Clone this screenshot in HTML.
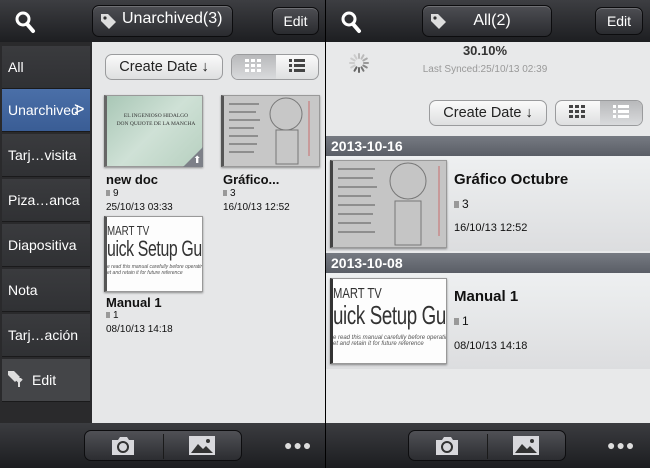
<!DOCTYPE html>
<html><head><meta charset="utf-8"><style>
*{box-sizing:border-box;margin:0;padding:0}
body{width:650px;height:468px;overflow:hidden;position:relative;font-family:"Liberation Sans",sans-serif;background:#000}
.a{position:absolute}
.hdr{background:linear-gradient(#3d3e42,#1d1e21);height:42px}
.btn{border:1px solid #0c0c0e;border-radius:7px;background:linear-gradient(#4d4e53,#2a2b2f);box-shadow:inset 0 1px 0 rgba(255,255,255,.2);color:#fff;text-align:center}
.side{background:#2a2a2c}
.si{position:absolute;left:2px;width:88px;height:43px;background:linear-gradient(#3a3b3e,#303134);color:#fff;font-size:14px;line-height:43px;padding-left:6px;border-bottom:1px solid #1a1a1b}
.lgt{background:#e6e7e8}
.sort{border:1px solid #9a9b9d;border-radius:7px;background:linear-gradient(#fafafa,#dedfe0);font-size:14.5px;color:#222;text-align:center}
.seg{border:1px solid #9a9b9d;border-radius:7px;background:linear-gradient(#fafafa,#dedfe0);overflow:hidden}
.bot{background:linear-gradient(#3b3c40,#1c1d20)}
.cam{border:1px solid #0d0d0f;border-radius:7px;background:linear-gradient(#505156,#2c2d31);overflow:hidden}
.b{font-weight:bold}
.dh{background:linear-gradient(#767a82,#5a5e66);color:#fff;font-weight:bold;font-size:14px;padding-left:5px;line-height:20px;height:20px}
.row{background:linear-gradient(#eef0f1,#dcdddf)}
.thumb{border:1px solid #999;box-shadow:0 1px 2px rgba(0,0,0,.4)}
.pg{display:inline-block;width:5px;height:7px;background:#999;margin-right:3px}
.cn{transform-origin:0 0;white-space:nowrap;color:#333;font-weight:normal}
</style></head><body>
<!-- LEFT PANEL -->
<div class="a hdr" style="left:0;top:0;width:325px"></div>
<svg class="a" style="left:14px;top:10px" width="22" height="24" viewBox="0 0 22 24"><circle cx="9" cy="9" r="6" fill="none" stroke="#fff" stroke-width="3"/><line x1="13" y1="14" x2="19" y2="21" stroke="#fff" stroke-width="4" stroke-linecap="round"/></svg>
<div class="a btn" style="left:92px;top:5px;width:141px;height:32px"></div>
<svg class="a" style="left:99px;top:12px" width="18" height="18" viewBox="0 0 18 18"><path d="M2 2h7l8 8-7 7-8-8z" fill="#ddd"/><circle cx="6" cy="6" r="1.6" fill="#333"/></svg>
<div class="a" style="left:122px;top:10px;color:#fff;font-size:16px">Unarchived(3)</div>
<div class="a btn" style="left:272px;top:7px;width:47px;height:28px;font-size:14px;line-height:27px">Edit</div>
<div class="a" style="left:0;top:42px;width:18px;height:3px;background:#ddd"></div>
<div class="a side" style="left:0;top:42px;width:92px;height:381px"></div>
<div class="si" style="top:46px">All</div>
<div class="si" style="top:89px;background:linear-gradient(#4a6fa8,#3a5d95);font-size:14px;padding-left:6px">Unarchived<span style="position:absolute;left:72px;top:-1px;font-size:18px">&gt;</span></div>
<div class="si" style="top:134px">Tarj…visita</div>
<div class="si" style="top:179px">Piza…anca</div>
<div class="si" style="top:224px">Diapositiva</div>
<div class="si" style="top:269px">Nota</div>
<div class="si" style="top:314px">Tarj…ación</div>
<div class="si" style="top:359px;background:#444548;padding-left:30px">Edit</div>
<svg class="a" style="left:7px;top:370px" width="20" height="18" viewBox="0 0 20 18"><path d="M1 1h6l6 6-5 5-7-7z" fill="#ddd"/><path d="M12 8v9M10 9h4M9 9l3 3 3-3" stroke="#ddd" stroke-width="2" fill="none"/></svg>
<div class="a lgt" style="left:92px;top:42px;width:233px;height:381px"></div>
<div class="a sort" style="left:105px;top:54px;width:118px;height:26px;line-height:24px">Create Date ↓</div>
<div class="a seg" style="left:231px;top:54px;width:88px;height:26px"><div style="position:absolute;left:0;top:0;width:44px;height:26px;background:linear-gradient(#b8b9bb,#dcdddf)"></div></div>
<svg class="a" style="left:245px;top:59px" width="16" height="15"><g fill="#fff"><rect x="0" y="0" width="4" height="3"/><rect x="6" y="0" width="4" height="3"/><rect x="12" y="0" width="4" height="3"/><rect x="0" y="5" width="4" height="3"/><rect x="6" y="5" width="4" height="3"/><rect x="12" y="5" width="4" height="3"/><rect x="0" y="10" width="4" height="3"/><rect x="6" y="10" width="4" height="3"/><rect x="12" y="10" width="4" height="3"/></g></svg>
<svg class="a" style="left:289px;top:59px" width="16" height="14"><g fill="#444"><rect x="0" y="0" width="3" height="3"/><rect x="5" y="0" width="11" height="3"/><rect x="0" y="5" width="3" height="3"/><rect x="5" y="5" width="11" height="3"/><rect x="0" y="10" width="3" height="3"/><rect x="5" y="10" width="11" height="3"/></g></svg>
<!-- grid thumbs -->
<div class="a thumb" style="left:104px;top:95px;width:99px;height:72px;background:linear-gradient(135deg,#a9c7b6,#cfe1d6 50%,#b7d0c0);border-left:3px solid #666"></div>
<div class="a" style="left:110px;top:112px;width:92px;font-family:'Liberation Serif',serif;font-size:5.5px;color:#333;text-align:center;line-height:8px">EL INGENIOSO HIDALGO<br>DON QUIJOTE DE LA MANCHA</div>
<div class="a" style="left:183px;top:147px;width:0;height:0;border-left:20px solid transparent;border-bottom:20px solid #7d8088"></div>
<div class="a" style="left:193px;top:155px;color:#fff;font-size:10px">⬆</div>
<div class="a thumb" style="left:221px;top:95px;width:99px;height:72px;background:#c7c7c7;border-left:3px solid #555"></div>
<svg class="a" style="left:224px;top:96px" width="95" height="70"><g stroke="#333" stroke-width="1.2" opacity=".6"><line x1="5" y1="8" x2="35" y2="8"/><line x1="5" y1="16" x2="32" y2="16"/><line x1="5" y1="24" x2="36" y2="24"/><line x1="5" y1="32" x2="30" y2="32"/><line x1="5" y1="40" x2="34" y2="40"/><line x1="5" y1="48" x2="33" y2="48"/><line x1="5" y1="56" x2="30" y2="56"/></g><circle cx="62" cy="18" r="16" fill="none" stroke="#777"/><rect x="52" y="34" width="22" height="34" fill="none" stroke="#777"/><g stroke="#c33" opacity=".6"><line x1="85" y1="5" x2="85" y2="60"/></g></svg>
<div class="a b" style="left:106px;top:172px;font-size:13px;color:#111">new doc</div>
<div class="a" style="left:106px;top:188px;font-size:10px;color:#111"><span class="pg" style="width:4px;height:6px"></span>9</div>
<div class="a" style="left:106px;top:202px;font-size:10px;color:#111">25/10/13 03:33</div>
<div class="a b" style="left:223px;top:172px;font-size:13px;color:#111">Gráfico...</div>
<div class="a" style="left:223px;top:188px;font-size:10px;color:#111"><span class="pg" style="width:4px;height:6px"></span>3</div>
<div class="a" style="left:223px;top:202px;font-size:10px;color:#111">16/10/13 12:52</div>
<div class="a thumb" style="left:104px;top:216px;width:99px;height:76px;background:#fdfdfd;border-left:3px solid #555;overflow:hidden">
<div class="cn" style="font-size:13px;margin-top:6px;transform:scaleX(.75)">MART TV</div>
<div class="cn" style="font-size:22px;margin-top:-2px;transform:scaleX(.72);letter-spacing:-.5px">uick Setup Guio</div>
<div class="cn" style="font-size:5px;margin-top:2px;color:#555;font-style:italic">e read this manual carefully before operating<br>et and retain it for future reference</div></div>
<div class="a b" style="left:106px;top:295px;font-size:13px;color:#111">Manual 1</div>
<div class="a" style="left:106px;top:310px;font-size:10px;color:#111"><span class="pg" style="width:4px;height:6px"></span>1</div>
<div class="a" style="left:106px;top:324px;font-size:10px;color:#111">08/10/13 14:18</div>
<div class="a bot" style="left:0;top:423px;width:325px;height:45px"></div>
<div class="a cam" style="left:84px;top:430px;width:158px;height:31px"><div style="position:absolute;left:78px;top:3px;width:1px;height:25px;background:#1a1a1a"></div></div>
<svg class="a" style="left:110px;top:435px" width="26" height="21"><path d="M2 5h6l2-3h7l2 3h5v15H2z" fill="#d8d8dc"/><circle cx="13" cy="12" r="5" fill="none" stroke="#333" stroke-width="2"/></svg>
<svg class="a" style="left:188px;top:435px" width="28" height="21"><rect x="1" y="1" width="26" height="19" fill="#d8d8dc"/><path d="M3 18l7-9 5 5 3-3 7 7z" fill="#333"/><circle cx="20" cy="6" r="2" fill="#333"/></svg>
<div class="a" style="left:284px;top:437px;color:#ddd;font-size:14px;letter-spacing:1px">●●●</div>

<!-- RIGHT PANEL -->
<div class="a hdr" style="left:325px;top:0;width:325px"></div>
<div class="a" style="left:325px;top:0;width:1px;height:468px;background:#000"></div>
<svg class="a" style="left:340px;top:10px" width="22" height="24" viewBox="0 0 22 24"><circle cx="9" cy="9" r="6" fill="none" stroke="#fff" stroke-width="3"/><line x1="13" y1="14" x2="19" y2="21" stroke="#fff" stroke-width="4" stroke-linecap="round"/></svg>
<div class="a btn" style="left:422px;top:5px;width:130px;height:32px;font-size:16px;line-height:30px;padding-left:10px">All(2)</div>
<svg class="a" style="left:429px;top:12px" width="18" height="18" viewBox="0 0 18 18"><path d="M2 2h7l8 8-7 7-8-8z" fill="#ddd"/><circle cx="6" cy="6" r="1.6" fill="#333"/></svg>
<div class="a btn" style="left:595px;top:7px;width:48px;height:28px;font-size:14px;line-height:27px">Edit</div>
<div class="a" style="left:326px;top:42px;width:95px;height:3px;background:#ddd"></div>
<div class="a lgt" style="left:326px;top:42px;width:324px;height:381px;background:#e8e9ea"></div>
<svg class="a" style="left:348px;top:52px" width="22" height="22" viewBox="-11 -11 22 22"><g stroke-width="2" stroke-linecap="round"><line x1="0" y1="-9" x2="0" y2="-5" stroke="#bbb" transform="rotate(0)"/><line x1="0" y1="-9" x2="0" y2="-5" stroke="#bbb" transform="rotate(30)"/><line x1="0" y1="-9" x2="0" y2="-5" stroke="#aaa" transform="rotate(60)"/><line x1="0" y1="-9" x2="0" y2="-5" stroke="#999" transform="rotate(90)"/><line x1="0" y1="-9" x2="0" y2="-5" stroke="#888" transform="rotate(120)"/><line x1="0" y1="-9" x2="0" y2="-5" stroke="#777" transform="rotate(150)"/><line x1="0" y1="-9" x2="0" y2="-5" stroke="#666" transform="rotate(180)"/><line x1="0" y1="-9" x2="0" y2="-5" stroke="#666" transform="rotate(210)"/><line x1="0" y1="-9" x2="0" y2="-5" stroke="#ccc" transform="rotate(240)"/><line x1="0" y1="-9" x2="0" y2="-5" stroke="#ccc" transform="rotate(270)"/><line x1="0" y1="-9" x2="0" y2="-5" stroke="#ccc" transform="rotate(300)"/><line x1="0" y1="-9" x2="0" y2="-5" stroke="#ccc" transform="rotate(330)"/></g></svg>
<div class="a b" style="left:400px;top:43px;width:170px;text-align:center;font-size:13px;color:#333">30.10%</div>
<div class="a" style="left:400px;top:64px;width:170px;text-align:center;font-size:10px;color:#999">Last Synced:25/10/13 02:39</div>
<div class="a sort" style="left:429px;top:100px;width:118px;height:26px;line-height:24px">Create Date ↓</div>
<div class="a seg" style="left:555px;top:100px;width:88px;height:26px"><div style="position:absolute;left:44px;top:0;width:44px;height:26px;background:linear-gradient(#b8b9bb,#dcdddf)"></div></div>
<svg class="a" style="left:569px;top:105px" width="16" height="15"><g fill="#444"><rect x="0" y="0" width="4" height="3"/><rect x="6" y="0" width="4" height="3"/><rect x="12" y="0" width="4" height="3"/><rect x="0" y="5" width="4" height="3"/><rect x="6" y="5" width="4" height="3"/><rect x="12" y="5" width="4" height="3"/><rect x="0" y="10" width="4" height="3"/><rect x="6" y="10" width="4" height="3"/><rect x="12" y="10" width="4" height="3"/></g></svg>
<svg class="a" style="left:613px;top:105px" width="16" height="14"><g fill="#fff"><rect x="0" y="0" width="3" height="3"/><rect x="5" y="0" width="11" height="3"/><rect x="0" y="5" width="3" height="3"/><rect x="5" y="5" width="11" height="3"/><rect x="0" y="10" width="3" height="3"/><rect x="5" y="10" width="11" height="3"/></g></svg>
<div class="a dh" style="left:326px;top:136px;width:324px">2013-10-16</div>
<div class="a row" style="left:326px;top:156px;width:324px;height:95px"></div>
<div class="a thumb" style="left:330px;top:160px;width:117px;height:88px;background:#c5c5c5;border-left:3px solid #444"></div>
<svg class="a" style="left:333px;top:161px" width="113" height="86"><g stroke="#333" stroke-width="1.2" opacity=".6"><line x1="5" y1="8" x2="42" y2="8"/><line x1="5" y1="17" x2="40" y2="17"/><line x1="5" y1="26" x2="44" y2="26"/><line x1="5" y1="35" x2="38" y2="35"/><line x1="5" y1="44" x2="42" y2="44"/><line x1="5" y1="53" x2="40" y2="53"/><line x1="5" y1="62" x2="38" y2="62"/><line x1="5" y1="71" x2="42" y2="71"/></g><circle cx="75" cy="20" r="18" fill="none" stroke="#777"/><rect x="62" y="40" width="26" height="44" fill="none" stroke="#777"/><line x1="106" y1="5" x2="106" y2="75" stroke="#c33" opacity=".6"/></svg>
<div class="a b" style="left:454px;top:171px;font-size:15px;color:#111">Gráfico Octubre</div>
<div class="a" style="left:454px;top:197px;font-size:12px;color:#111"><span class="pg"></span>3</div>
<div class="a" style="left:454px;top:222px;font-size:11px;color:#111">16/10/13 12:52</div>
<div class="a dh" style="left:326px;top:253px;width:324px">2013-10-08</div>
<div class="a row" style="left:326px;top:273px;width:324px;height:96px"></div>
<div class="a thumb" style="left:330px;top:278px;width:117px;height:86px;background:#fdfdfd;border-left:3px solid #333;overflow:hidden">
<div class="cn" style="font-size:15px;margin-top:6px;transform:scaleX(.75)">MART TV</div>
<div class="cn" style="font-size:26px;margin-top:-2px;transform:scaleX(.72);letter-spacing:-.5px">uick Setup Guide</div>
<div class="cn" style="font-size:6px;margin-top:4px;color:#555;font-style:italic">e read this manual carefully before operating<br>et and retain it for future reference</div></div>
<div class="a b" style="left:454px;top:288px;font-size:15px;color:#111">Manual 1</div>
<div class="a" style="left:454px;top:314px;font-size:12px;color:#111"><span class="pg"></span>1</div>
<div class="a" style="left:454px;top:340px;font-size:11px;color:#111">08/10/13 14:18</div>
<div class="a bot" style="left:326px;top:423px;width:324px;height:45px"></div>
<div class="a cam" style="left:408px;top:430px;width:158px;height:31px"><div style="position:absolute;left:78px;top:3px;width:1px;height:25px;background:#1a1a1a"></div></div>
<svg class="a" style="left:434px;top:435px" width="26" height="21"><path d="M2 5h6l2-3h7l2 3h5v15H2z" fill="#d8d8dc"/><circle cx="13" cy="12" r="5" fill="none" stroke="#333" stroke-width="2"/></svg>
<svg class="a" style="left:512px;top:435px" width="28" height="21"><rect x="1" y="1" width="26" height="19" fill="#d8d8dc"/><path d="M3 18l7-9 5 5 3-3 7 7z" fill="#333"/><circle cx="20" cy="6" r="2" fill="#333"/></svg>
<div class="a" style="left:607px;top:437px;color:#ddd;font-size:14px;letter-spacing:1px">●●●</div>
</body></html>
